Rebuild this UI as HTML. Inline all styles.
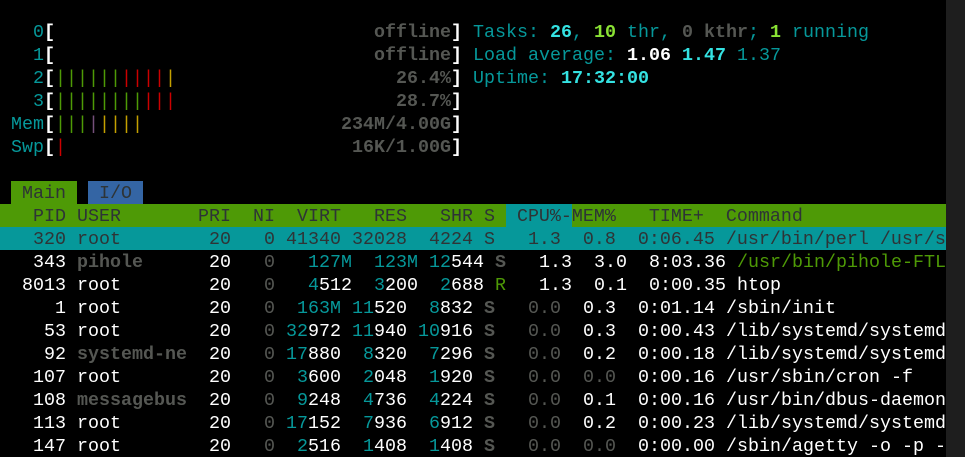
<!DOCTYPE html>
<html><head><meta charset="utf-8"><style>
html,body{margin:0;padding:0;background:#000;}
body{width:965px;height:457px;overflow:hidden;position:relative;background:#1e1e1e;}
#t{position:absolute;left:0;top:0;width:946px;height:457px;background:#000;overflow:hidden;}
.l{position:absolute;left:11px;height:23px;line-height:23px;white-space:pre;font-family:"Liberation Mono",monospace;font-size:18.33px;color:#fff;}
.w{color:#fff}.c{color:#06989a}.C{color:#34e2e2;font-weight:bold}.g{color:#555753}.gb{color:#555753;font-weight:bold}
.G{color:#4e9a06}.Gb{color:#8ae234;font-weight:bold}.r{color:#cc0000}.y{color:#c4a000}.p{color:#75507b}.o{color:#c4a000}
.W{color:#fff;font-weight:bold}
.bar{position:absolute;height:23px;}
</style></head><body><div id="t">
<div class="l" style="top:20.5px"><span class="c">  0</span><span class="W">[</span>                             <span class="gb">offline</span><span class="W">]</span> <span class="c">Tasks: </span><span class="C">26</span><span class="c">, </span><span class="Gb">10</span><span class="c"> thr, </span><span class="gb">0 kthr</span><span class="c">; </span><span class="Gb">1</span><span class="c"> running</span></div>
<div class="l" style="top:43.5px"><span class="c">  1</span><span class="W">[</span>                             <span class="gb">offline</span><span class="W">]</span> <span class="c">Load average: </span><span class="W">1.06 </span><span class="C">1.47 </span><span class="c">1.37</span></div>
<div class="l" style="top:66.5px"><span class="c">  2</span><span class="W">[</span><span class="G">||||||</span><span class="r">||||</span><span class="y">|</span>                    <span class="gb">26.4%</span><span class="W">]</span> <span class="c">Uptime: </span><span class="C">17:32:00</span></div>
<div class="l" style="top:89.5px"><span class="c">  3</span><span class="W">[</span><span class="G">||||||||</span><span class="r">|||</span>                    <span class="gb">28.7%</span><span class="W">]</span></div>
<div class="l" style="top:112.5px"><span class="c">Mem</span><span class="W">[</span><span class="G">|||</span><span class="p">|</span><span class="o">||||</span>                  <span class="gb">234M/4.00G</span><span class="W">]</span></div>
<div class="l" style="top:135.5px"><span class="c">Swp</span><span class="W">[</span><span class="r">|</span>                          <span class="gb">16K/1.00G</span><span class="W">]</span></div>
<div class="bar" style="top:181px;left:11px;width:66px;background:#4e9a06"></div>
<div class="bar" style="top:181px;left:88px;width:55px;background:#3465a4"></div>
<div class="l" style="top:181.5px;color:#2e3436"> Main   I/O</div>
<div class="bar" style="top:204px;left:0;width:946px;background:#4e9a06"></div>
<div class="bar" style="top:204px;left:506px;width:66px;background:#06989a"></div>
<div class="l" style="top:204.5px;color:#2e3436">  PID USER       PRI  NI  VIRT   RES   SHR S  CPU%-MEM%   TIME+  Command</div>
<div class="bar" style="top:227px;left:0;width:946px;background:#06989a"></div>
<div class="l" style="top:227.5px;color:#2e3436">  320 root        20   0 41340 32028  4224 S   1.3  0.8  0:06.45 /usr/bin/perl /usr/s</div>
<div class="l" style="top:250.5px">  343 <span class="gb">pihole   </span>   20   <span class="g">0</span>   <span class="c">127M</span>  <span class="c">123M</span> <span class="c">12</span>544 <span class="gb">S</span>   1.3  3.0  8:03.36 <span class="G">/usr/bin/pihole-FTL</span></div>
<div class="l" style="top:273.5px"> 8013 root        20   <span class="g">0</span>   <span class="c">4</span>512  <span class="c">3</span>200  <span class="c">2</span>688 <span class="G">R</span>   1.3  0.1  0:00.35 htop</div>
<div class="l" style="top:296.5px">    1 root        20   <span class="g">0</span>  <span class="c">163M</span> <span class="c">11</span>520  <span class="c">8</span>832 <span class="gb">S</span>   <span class="g">0.0</span>  0.3  0:01.14 /sbin/init</div>
<div class="l" style="top:319.5px">   53 root        20   <span class="g">0</span> <span class="c">32</span>972 <span class="c">11</span>940 <span class="c">10</span>916 <span class="gb">S</span>   <span class="g">0.0</span>  0.3  0:00.43 /lib/systemd/systemd</div>
<div class="l" style="top:342.5px">   92 <span class="gb">systemd-ne</span>  20   <span class="g">0</span> <span class="c">17</span>880  <span class="c">8</span>320  <span class="c">7</span>296 <span class="gb">S</span>   <span class="g">0.0</span>  0.2  0:00.18 /lib/systemd/systemd</div>
<div class="l" style="top:365.5px">  107 root        20   <span class="g">0</span>  <span class="c">3</span>600  <span class="c">2</span>048  <span class="c">1</span>920 <span class="gb">S</span>   <span class="g">0.0</span>  <span class="g">0.0</span>  0:00.16 /usr/sbin/cron -f</div>
<div class="l" style="top:388.5px">  108 <span class="gb">messagebus</span>  20   <span class="g">0</span>  <span class="c">9</span>248  <span class="c">4</span>736  <span class="c">4</span>224 <span class="gb">S</span>   <span class="g">0.0</span>  0.1  0:00.16 /usr/bin/dbus-daemon</div>
<div class="l" style="top:411.5px">  113 root        20   <span class="g">0</span> <span class="c">17</span>152  <span class="c">7</span>936  <span class="c">6</span>912 <span class="gb">S</span>   <span class="g">0.0</span>  0.2  0:00.23 /lib/systemd/systemd</div>
<div class="l" style="top:434.5px">  147 root        20   <span class="g">0</span>  <span class="c">2</span>516  <span class="c">1</span>408  <span class="c">1</span>408 <span class="gb">S</span>   <span class="g">0.0</span>  <span class="g">0.0</span>  0:00.00 /sbin/agetty -o -p -</div>
</div></body></html>
